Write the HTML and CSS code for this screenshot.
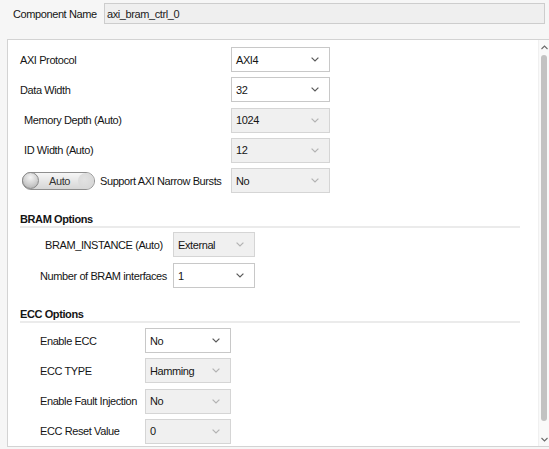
FILE: index.html
```html
<!DOCTYPE html>
<html>
<head>
<meta charset="utf-8">
<link rel="stylesheet" href="styles.css">
</head>
<body>
<div class="top">
  <span class="top-label">Component Name</span>
  <div class="name-field">axi_bram_ctrl_0</div>
</div>
<div class="panel">
  <div class="content">
    <div class="group g1">
      <div class="row"><div class="lbl">AXI Protocol</div><div class="dd w99"><span>AXI4</span><svg class="chev" width="8" height="5" viewBox="0 0 8 5"><polyline points="0.6,0.6 4,4 7.4,0.6"/></svg></div></div>
      <div class="row"><div class="lbl">Data Width</div><div class="dd w99"><span>32</span><svg class="chev" width="8" height="5" viewBox="0 0 8 5"><polyline points="0.6,0.6 4,4 7.4,0.6"/></svg></div></div>
      <div class="row"><div class="lbl auto">Memory Depth (Auto)</div><div class="dd dis w99"><span>1024</span><svg class="chev" width="8" height="5" viewBox="0 0 8 5"><polyline points="0.6,0.6 4,4 7.4,0.6"/></svg></div></div>
      <div class="row"><div class="lbl auto">ID Width (Auto)</div><div class="dd dis w99"><span>12</span><svg class="chev" width="8" height="5" viewBox="0 0 8 5"><polyline points="0.6,0.6 4,4 7.4,0.6"/></svg></div></div>
      <div class="row"><div class="lbl tcell"><div class="toggle"><span class="knob"></span><span class="ttext">Auto</span><span class="knob ghost"></span></div><span>Support AXI Narrow Bursts</span></div><div class="dd dis w99"><span>No</span><svg class="chev" width="8" height="5" viewBox="0 0 8 5"><polyline points="0.6,0.6 4,4 7.4,0.6"/></svg></div></div>
    </div>
    <div class="heading h-bram">BRAM Options</div>
    <div class="group g2">
      <div class="row"><div class="lbl l2 inst">BRAM_INSTANCE (Auto)</div><div class="dd dis w82"><span>External</span><svg class="chev" width="8" height="5" viewBox="0 0 8 5"><polyline points="0.6,0.6 4,4 7.4,0.6"/></svg></div></div>
      <div class="row"><div class="lbl l2">Number of BRAM interfaces</div><div class="dd w82"><span>1</span><svg class="chev" width="8" height="5" viewBox="0 0 8 5"><polyline points="0.6,0.6 4,4 7.4,0.6"/></svg></div></div>
    </div>
    <div class="heading h-ecc">ECC Options</div>
    <div class="group g3">
      <div class="row"><div class="lbl l3">Enable ECC</div><div class="dd w86"><span>No</span><svg class="chev" width="8" height="5" viewBox="0 0 8 5"><polyline points="0.6,0.6 4,4 7.4,0.6"/></svg></div></div>
      <div class="row"><div class="lbl l3">ECC TYPE</div><div class="dd dis w86"><span>Hamming</span><svg class="chev" width="8" height="5" viewBox="0 0 8 5"><polyline points="0.6,0.6 4,4 7.4,0.6"/></svg></div></div>
      <div class="row"><div class="lbl l3">Enable Fault Injection</div><div class="dd dis w86"><span>No</span><svg class="chev" width="8" height="5" viewBox="0 0 8 5"><polyline points="0.6,0.6 4,4 7.4,0.6"/></svg></div></div>
      <div class="row"><div class="lbl l3">ECC Reset Value</div><div class="dd dis w86"><span>0</span><svg class="chev" width="8" height="5" viewBox="0 0 8 5"><polyline points="0.6,0.6 4,4 7.4,0.6"/></svg></div></div>
    </div>
  </div>
  <div class="scroll">
    <svg class="sarrow up" width="7" height="5" viewBox="0 0 7 5"><polyline points="0.5,4 3.5,1 6.5,4"/></svg>
    <div class="thumb"></div>
    <svg class="sarrow down" width="7" height="5" viewBox="0 0 7 5"><polyline points="0.5,1 3.5,4 6.5,1"/></svg>
  </div>
</div>
</body>
</html>
```
FILE: styles.css
```css
* { box-sizing: border-box; }
html, body { margin: 0; }
body {
  width: 549px;
  height: 449px;
  overflow: hidden;
  background: #f6f6f6;
  font-family: "Liberation Sans", Arial, sans-serif;
  font-size: 11px;
  letter-spacing: -0.4px;
  color: #151515;
}
.top {
  display: flex;
  align-items: center;
  gap: 5px;
  height: 21px;
  margin-top: 3px;
  padding: 0 4px 0 13px;
}
.top-label { width: 86px; white-space: nowrap; }
.name-field {
  flex: 1;
  height: 21px;
  display: flex;
  align-items: center;
  padding-left: 2px;
  border: 1px solid #cdcdcd;
  background: #efefef;
  color: #222;
}
.panel {
  display: flex;
  height: 408px;
  margin: 15px 0 0 7px;
  border: 1px solid #d3d3d3;
  border-right: none;
  background: #fff;
}
.content {
  flex: 1;
  overflow: hidden;
  padding-top: 7px;
}
.group { display: flex; flex-direction: column; }
.g1 { gap: 5.25px; padding-left: 12px; }
.g2 { gap: 6px; padding-left: 32px; margin-top: 4px; }
.g3 { gap: 5.33px; padding-left: 32px; margin-top: 5px; }
.row { display: flex; align-items: center; height: 25px; flex: none; }
.lbl { width: 211px; white-space: nowrap; flex: none; }
.lbl.auto { padding-left: 4px; }
.g2 .lbl.l2 { width: 133px; }
.g2 .lbl.l2.inst { padding-left: 5px; }
.g3 .lbl.l3 { width: 105px; }
.tcell { display: flex; align-items: center; gap: 5px; padding-left: 2px; }
.toggle {
  width: 73px;
  height: 18px;
  display: flex;
  align-items: center;
  justify-content: space-between;
  border: 1px solid #8f8f8f;
  border-radius: 9px;
  background: linear-gradient(#f6f6f6, #d6d6d6);
  flex: none;
}
.knob {
  width: 17px;
  height: 17px;
  margin: -1px 0 -1px -1px;
  border-radius: 50%;
  border: 1px solid #8a8a8a;
  background: radial-gradient(circle at 50% 30%, #f4f4f4 0%, #cfcfcf 55%, #a9a9a9 100%);
}
.knob.ghost {
  width: 16px;
  height: 16px;
  margin: 0;
  border: none;
  background: radial-gradient(circle at 40% 40%, #e2e2e2 0%, #d4d4d4 100%);
}
.ttext { color: #333; padding-left: 2px; }
.dd {
  flex: none;
  height: 25px;
  display: flex;
  align-items: center;
  justify-content: space-between;
  padding: 0 10px 0 4px;
  border: 1px solid #c8c8c8;
  background: #fff;
}
.dd.dis { background: #f0f0f0; border-color: #d5d5d5; }
.w99 { width: 99px; }
.w82 { width: 82px; }
.w86 { width: 86px; }
.chev { fill: none; stroke: #5a5a5a; stroke-width: 1.2; }
.dd.dis .chev { stroke: #b3b3b3; }
.heading {
  height: 16px;
  line-height: 14px;
  margin: 19px 18px 0 12px;
  border-bottom: 2px solid #ebebeb;
  font-weight: bold;
}
.scroll {
  width: 11px;
  flex: none;
  display: flex;
  flex-direction: column;
  align-items: center;
  background: #f9f9f9;
  border-left: 1px solid #f0f0f0;
}
.sarrow { fill: none; stroke: #6a6a6a; stroke-width: 1.1; flex: none; }
.sarrow.up { margin-top: 5px; }
.thumb {
  width: 6px;
  height: 366px;
  margin-top: 5px;
  border-radius: 3px;
  background: #c2c2c2;
  flex: none;
}
.sarrow.down { margin-top: 16px; }
```
